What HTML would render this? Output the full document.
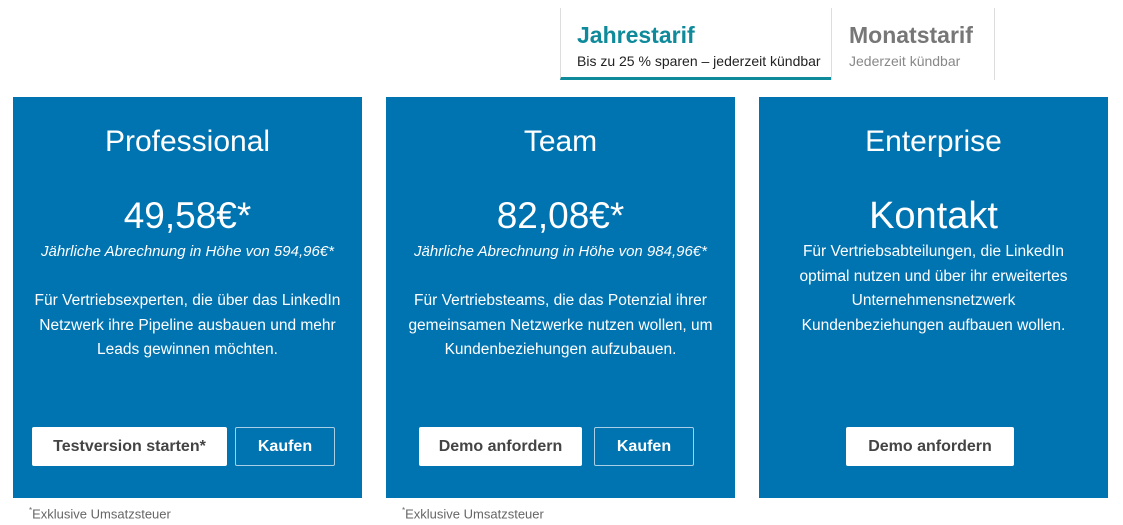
<!DOCTYPE html>
<html><head><meta charset="utf-8"><style>
*{margin:0;padding:0;box-sizing:border-box}
body{width:1123px;height:525px;background:#fff;font-family:"Liberation Sans",sans-serif;position:relative;overflow:hidden}
.tab{position:absolute;top:8px;height:72px}
.t1{left:560px;width:271px;border-left:1px solid #ddd;border-bottom:3px solid #0e8a9a;padding:13px 0 0 16px}
.t2{left:831px;width:164px;border-left:1px solid #ddd;border-right:1px solid #ddd;padding:13px 0 0 17px}
.tab h3{font-size:23px;font-weight:bold;line-height:28px}
.tab p{font-size:14px;margin-top:4px}
.card{position:absolute;top:97px;width:349px;height:401px;background:#0073b1;color:#fff;text-align:center}
.card h2{position:absolute;top:28px;width:100%;font-size:30px;font-weight:normal}
.price{position:absolute;top:98px;width:100%;font-size:37px}
.it{position:absolute;top:146px;width:100%;font-size:15px;font-style:italic}
.desc{position:absolute;top:192px;left:18px;right:18px;font-size:15.5px;line-height:24.5px}
.btn{position:absolute;top:330px;height:39px;font-size:16px;font-weight:bold;line-height:39px;border-radius:2px}
.w{background:#fff;color:#444}
.o{border:1px solid #a9cfe6;color:#fff;line-height:37px}
.fn{position:absolute;top:506px;font-size:13px;color:#666}
.fn sup{font-size:8px}
</style></head><body>
<div class="tab t1"><h3 style="color:#0e8a9a">Jahrestarif</h3><p style="color:#222">Bis zu 25 % sparen – jederzeit kündbar</p></div>
<div class="tab t2"><h3 style="color:#777">Monatstarif</h3><p style="color:#888">Jederzeit kündbar</p></div>

<div class="card" style="left:13px"><h2>Professional</h2><div class="price">49,58€*</div><div class="it">Jährliche Abrechnung in Höhe von 594,96€*</div>
<div class="desc">Für Vertriebsexperten, die über das LinkedIn Netzwerk ihre Pipeline ausbauen und mehr Leads gewinnen möchten.</div>
<div class="btn w" style="left:19px;width:195px">Testversion starten*</div><div class="btn o" style="left:222px;width:100px">Kaufen</div></div>

<div class="card" style="left:386px"><h2>Team</h2><div class="price">82,08€*</div><div class="it">Jährliche Abrechnung in Höhe von 984,96€*</div>
<div class="desc">Für Vertriebsteams, die das Potenzial ihrer gemeinsamen Netzwerke nutzen wollen, um Kundenbeziehungen aufzubauen.</div>
<div class="btn w" style="left:33px;width:163px">Demo anfordern</div><div class="btn o" style="left:208px;width:100px">Kaufen</div></div>

<div class="card" style="left:759px"><h2>Enterprise</h2><div class="price" style="font-size:38px">Kontakt</div>
<div class="desc" style="top:143px;left:30px;right:30px">Für Vertriebsabteilungen, die LinkedIn optimal nutzen und über ihr erweitertes Unternehmensnetzwerk Kundenbeziehungen aufbauen wollen.</div>
<div class="btn w" style="left:87px;width:168px">Demo anfordern</div></div>

<div class="fn" style="left:29px"><sup>*</sup>Exklusive Umsatzsteuer</div>
<div class="fn" style="left:402px"><sup>*</sup>Exklusive Umsatzsteuer</div>
</body></html>
